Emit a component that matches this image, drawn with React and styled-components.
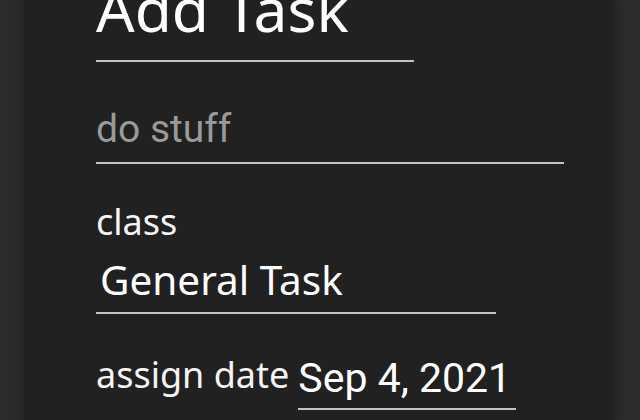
import React from "react";
import styled, { createGlobalStyle } from "styled-components";

const Global = createGlobalStyle`
  html, body { margin: 0; padding: 0; background: #2b2b2b; }
  body { font-family: "Noto Sans", sans-serif; color: #f2f2f2; overflow: hidden; }
  * { box-sizing: border-box; }
`;

const Panel = styled.main`
  width: 590px;
  min-height: 420px;
  margin-left: 24px;
  background: #212121;
  box-shadow: 0 0 10px rgba(0, 0, 0, 0.35);
  padding: 0 72px;
  display: flex;
  flex-direction: column;
  align-items: flex-start;
`;

const Title = styled.h1`
  margin: -33px 0 0 0;
  width: 318px;
  padding-bottom: 10px;
  border-bottom: 2px solid #c4c4c4;
  font-family: "Noto Sans", sans-serif;
  font-weight: 400;
  font-size: 60.5px;
  line-height: normal;
  color: #ffffff;
`;

const TextField = styled.input`
  margin-top: 44px;
  width: ${(p) => p.$w}px;
  padding: 0 0 10px 0;
  border: none;
  border-bottom: 2px solid #c4c4c4;
  background: transparent;
  outline: none;
  font-family: Roboto, sans-serif;
  font-size: 39px;
  line-height: normal;
  color: #ffffff;
  &::placeholder { color: #9a9a9a; opacity: 1; }
`;

const Label = styled.label`
  display: block;
  margin-top: ${(p) => p.$mt}px;
  font-family: "Noto Sans", sans-serif;
  font-size: 36px;
  line-height: normal;
  color: #f4f4f4;
`;

const Select = styled.select`
  appearance: none;
  -webkit-appearance: none;
  margin-top: 6px;
  width: 400px;
  height: 62px;
  padding: 0 0 5px 4px;
  border: none;
  border-bottom: 2px solid #c4c4c4;
  border-radius: 0;
  background: transparent;
  outline: none;
  font-family: "Noto Sans", sans-serif;
  font-size: 40.5px;
  color: #ffffff;
  option { background: #212121; color: #fff; }
`;

const DateRow = styled.div`
  display: flex;
  align-items: flex-start;
  gap: 9px;
  margin-top: 36px;
`;

const DateField = styled.input`
  margin-top: 4px;
  width: 218px;
  padding: 0 0 6px 0;
  border: none;
  border-bottom: 2px solid #c4c4c4;
  background: transparent;
  outline: none;
  font-family: Roboto, sans-serif;
  font-size: 41px;
  line-height: normal;
  color: #ffffff;
`;

export default function App() {
  return (
    <>
      <Global />
      <Panel>
        <Title>Add Task</Title>
        <TextField $w={468} placeholder="do stuff" />
        <Label $mt={33} htmlFor="cls">class</Label>
        <Select id="cls" defaultValue="general">
          <option value="general">General Task</option>
          <option value="homework">Homework</option>
        </Select>
        <DateRow>
          <Label $mt={0} htmlFor="assign">assign date</Label>
          <DateField id="assign" defaultValue="Sep 4, 2021" readOnly />
        </DateRow>
      </Panel>
    </>
  );
}
